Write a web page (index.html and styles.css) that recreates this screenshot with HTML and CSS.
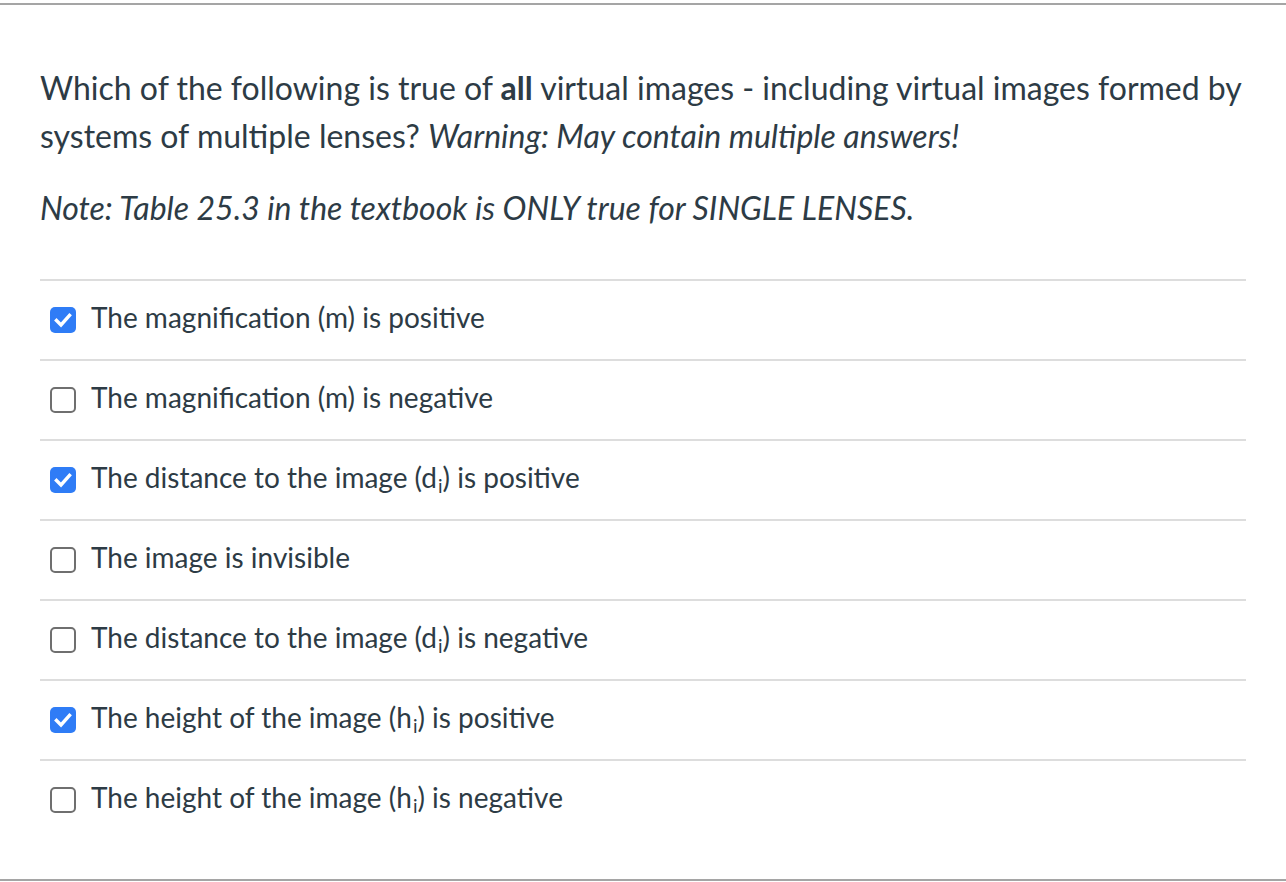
FILE: index.html
```html
<!DOCTYPE html>
<html>
<head>
<meta charset="utf-8">
<link rel="stylesheet" href="styles.css">
</head>
<body>
<div class="frame">
  <div class="question">
    <p class="q-text">Which of the following is true of <strong>all</strong> virtual images - including virtual images formed by systems of multiple lenses? <em>Warning: May contain multiple answers!</em></p>
    <p class="q-note"><em>Note: Table 25.3 in the textbook is ONLY true for SINGLE LENSES.</em></p>
  </div>
  <ul class="answers">
    <li class="answer"><span class="box checked"><svg viewBox="0 0 26 26" width="26" height="26"><path d="M6.5 13.5 L11 18 L19.5 8.5" fill="none" stroke="#fff" stroke-width="3.4" stroke-linecap="square" stroke-linejoin="miter"/></svg></span><span class="label">The magnification (m) is positive</span></li>
    <li class="answer"><span class="box"></span><span class="label">The magnification (m) is negative</span></li>
    <li class="answer"><span class="box checked"><svg viewBox="0 0 26 26" width="26" height="26"><path d="M6.5 13.5 L11 18 L19.5 8.5" fill="none" stroke="#fff" stroke-width="3.4" stroke-linecap="square" stroke-linejoin="miter"/></svg></span><span class="label">The distance to the image (d<sub>i</sub>) is positive</span></li>
    <li class="answer"><span class="box"></span><span class="label">The image is invisible</span></li>
    <li class="answer"><span class="box"></span><span class="label">The distance to the image (d<sub>i</sub>) is negative</span></li>
    <li class="answer"><span class="box checked"><svg viewBox="0 0 26 26" width="26" height="26"><path d="M6.5 13.5 L11 18 L19.5 8.5" fill="none" stroke="#fff" stroke-width="3.4" stroke-linecap="square" stroke-linejoin="miter"/></svg></span><span class="label">The height of the image (h<sub>i</sub>) is positive</span></li>
    <li class="answer"><span class="box"></span><span class="label">The height of the image (h<sub>i</sub>) is negative</span></li>
  </ul>
</div>
</body>
</html>
```

FILE: styles.css
```css
html, body {
  margin: 0;
  padding: 0;
  background: #fff;
}
body {
  font-family: Lato, "Noto Sans", sans-serif;
  color: #2d3b45;
  padding-top: 3px;
}
.frame {
  border-top: 2px solid #a5a5a5;
  border-bottom: 2px solid #a5a5a5;
  height: 874px;
  box-sizing: content-box;
  padding: 0 40px;
}
.question {
  padding-top: 59px;
}
.q-text, .q-note {
  margin: 0;
  font-size: 32px;
  line-height: 48px;
}
.q-note {
  margin-top: 24px;
}
.q-text strong {
  font-weight: 700;
}
.answers {
  list-style: none;
  margin: 47px 0 0 0;
  padding: 0;
}
.answer {
  display: flex;
  align-items: center;
  height: 78px;
  border-top: 2px solid #dddddd;
  padding-left: 10px;
  gap: 15px;
}
.box {
  width: 26px;
  height: 26px;
  box-sizing: border-box;
  border: 2px solid #6f6f6f;
  border-radius: 5px;
  flex: none;
  display: flex;
}
.box.checked {
  background: #2f7cf6;
  border: none;
}
.label {
  font-size: 28px;
  line-height: 32px;
  position: relative;
  top: -3px;
}
sub {
  font-size: 19px;
  line-height: 0;
  vertical-align: -5px;
  margin-left: 1px;
}
```
